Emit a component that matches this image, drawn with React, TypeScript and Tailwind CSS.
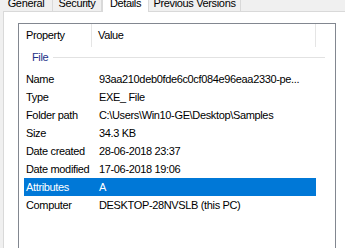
import React from "react"

const rows = [
  { label: "Name", value: "93aa210deb0fde6c0cf084e96eaa2330-pe..." },
  { label: "Type", value: "EXE_ File" },
  { label: "Folder path", value: "C:\\Users\\Win10-GE\\Desktop\\Samples" },
  { label: "Size", value: "34.3 KB" },
  { label: "Date created", value: "28-06-2018 23:37" },
  { label: "Date modified", value: "17-06-2018 19:06" },
  { label: "Attributes", value: "A", selected: true },
  { label: "Computer", value: "DESKTOP-28NVSLB (this PC)" },
]

const tabs = [
  { name: "General", w: "w-[53px]" },
  { name: "Security", w: "w-[49px]" },
  { name: "Details", w: "w-[47px]", active: true },
  { name: "Previous Versions", w: "w-[92px]" },
]

export default function App() {
  return (
    <div className="w-[345px] h-[248px] overflow-hidden bg-[#f0f0f0] text-[11px] tracking-[-0.35px] text-black font-['Liberation_Sans',Arial,sans-serif]">
      {/* tab strip, top cut off */}
      <div className="flex h-[11px] items-end">
        {tabs.map((t) =>
          t.active ? (
            <div
              key={t.name}
              className={`${t.w} relative z-10 -mb-px h-[12px] border-x border-[#d9d9d9] bg-white flex justify-center overflow-hidden`}
            >
              <span className="-mt-[4px] leading-[14px] whitespace-nowrap">{t.name}</span>
            </div>
          ) : (
            <div
              key={t.name}
              className={`${t.w} h-[11px] border-r border-[#d9d9d9] bg-[#f0f0f0] flex justify-center overflow-hidden`}
            >
              <span className="-mt-[4px] leading-[14px] whitespace-nowrap">{t.name}</span>
            </div>
          )
        )}
      </div>

      {/* page */}
      <div className="ml-[3px] h-[237px] border-l border-t border-[#d9d9d9] bg-white pl-[14px] pt-[11px]">
        <div className="w-[318px] h-[300px] border border-[#828790] bg-white">
          {/* column header */}
          <div className="flex h-[23px] items-center">
            <div className="w-[73px] shrink-0 h-full flex items-center pl-[7px] border-r border-[#e5e5e5]">Property</div>
            <div className="w-[224px] shrink-0 h-full flex items-center pl-[6px] border-r border-[#e5e5e5]">Value</div>
          </div>

          {/* group */}
          <div className="flex h-[23px] items-start pt-[3px] pl-[13px] pr-[10px]">
            <span className="leading-[14px] text-[#1e3287]">File</span>
            <div className="ml-[5px] mt-[7px] flex-1 border-t border-[#e2e2e2]" />
          </div>

          {/* rows */}
          <div className="ml-[5px] w-[292px]">
            {rows.map((r) => (
              <div
                key={r.label}
                className={`flex h-[18px] items-center ${r.selected ? "bg-[#0078d7] text-white" : ""}`}
              >
                <div className="w-[75px] shrink-0 pl-[2px] whitespace-nowrap">{r.label}</div>
                <div className="whitespace-nowrap">{r.value}</div>
              </div>
            ))}
          </div>
        </div>
      </div>
    </div>
  )
}
